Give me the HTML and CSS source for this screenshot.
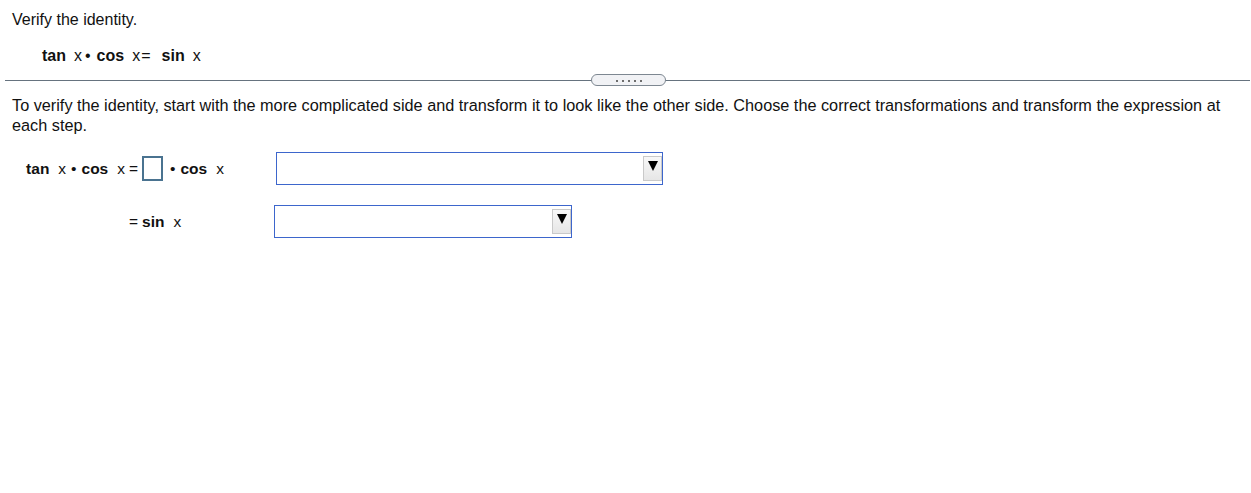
FILE: index.html
```html
<!DOCTYPE html>
<html lang="en">
<head>
  <meta charset="UTF-8" />
  <title>Verify the identity</title>
  <link rel="stylesheet" href="styles.css">
</head>
<body>

  <div class="question">
    <p class="prompt">Verify the identity.</p>
    <div class="given">
      <b>tan</b><span class="var">x</span><span class="dot">•</span><b>cos</b><span class="var">x</span><span class="eq">=</span><b>sin</b><span class="var">x</span>
    </div>
  </div>

  <div class="divider">
    <div class="pill"><span></span><span></span><span></span><span></span><span></span></div>
  </div>

  <div class="answer">
    <p class="hint">To verify the identity, start with the more complicated side and transform it to look like the other side. Choose the correct transformations and transform the expression at each step.</p>

    <div class="steps">
      <div class="lhs"><b>tan</b><span class="var">x</span><span class="dot">•</span><b>cos</b><span class="var">x</span></div>
      <div class="rhs"><span class="eq">=</span><span class="blank"></span><span class="dot">•</span><b>cos</b><span class="var">x</span></div>
      <div class="dropdown wide">
        <span class="arrow-btn"><span class="arrow"></span></span>
      </div>

      <div class="lhs"></div>
      <div class="rhs"><span class="eq">=</span><b>sin</b><span class="var">x</span></div>
      <div class="dropdown narrow">
        <span class="arrow-btn"><span class="arrow"></span></span>
      </div>
    </div>
  </div>

</body>
</html>
```

FILE: styles.css
```css
body {
  margin: 0;
  font-family: "Liberation Sans", Arial, sans-serif;
  font-size: 16px;
  color: #111;
  background: #fff;
}

p {
  margin: 0;
}

.question {
  padding: 10px 0 0 12px;
}

.prompt {
  line-height: 19px;
}

/* the identity as given */
.given {
  margin: 17px 0 0 30px;
  font-size: 16px;
  line-height: 20px;
}

.given .var {
  margin: 0 0 0 8px;
}

.given .dot {
  margin: 0 6px 0 3px;
}

.given .eq {
  margin: 0 11px 0 1px;
}

/* section divider with the collapse handle */
.divider {
  position: relative;
  margin: 14px 1px 0 5px;
  height: 1px;
  background: #66737f;
}

.pill {
  position: absolute;
  left: 586px;
  top: -6px;
  width: 73px;
  height: 10px;
  border: 1px solid #7d8791;
  border-radius: 6px;
  background: #f1f2f5;
  display: flex;
  justify-content: center;
  align-items: center;
  gap: 4px;
}

.pill span {
  width: 2px;
  height: 2px;
  background: #6e6e6e;
  margin-top: 2px;
}

.answer {
  padding: 14px 0 0 12px;
}

.hint {
  font-size: 16.25px;
  line-height: 20px;
  padding-right: 10px;
}

/* worked steps: left side, right side, reason */
.steps {
  display: grid;
  grid-template-columns: 117px 147px auto;
  grid-auto-rows: 33px;
  row-gap: 20px;
  align-items: center;
  margin-top: 17px;
  font-size: 15.5px;
}

.lhs {
  justify-self: end;
}

.var {
  margin: 0 0 0 9px;
}

.dot {
  margin: 0 5px 0 5px;
}

.lhs .var:last-child {
  margin-right: 4px;
}

.rhs {
  display: flex;
  align-items: center;
}

.eq {
  margin-right: 4px;
}

.blank {
  display: inline-block;
  width: 17px;
  height: 21px;
  border: 2px solid #4a7390;
  margin-right: 2px;
}

.dropdown {
  position: relative;
  height: 31px;
  border: 1px solid #3d66cc;
  background: #fff;
}

.dropdown.wide {
  width: 385px;
}

.dropdown.narrow {
  width: 296px;
  margin-left: -2px;
}

.arrow-btn {
  position: absolute;
  right: 0;
  top: 3px;
  width: 19px;
  height: 25px;
  box-sizing: border-box;
  padding-top: 4px;
  border: 1px solid #c9c9c9;
  background: linear-gradient(#f8f8f8, #e6e6e6);
  display: flex;
  justify-content: center;
}

.arrow {
  width: 0;
  height: 0;
  border-left: 5.5px solid transparent;
  border-right: 5.5px solid transparent;
  border-top: 10px solid #000;
}
```
